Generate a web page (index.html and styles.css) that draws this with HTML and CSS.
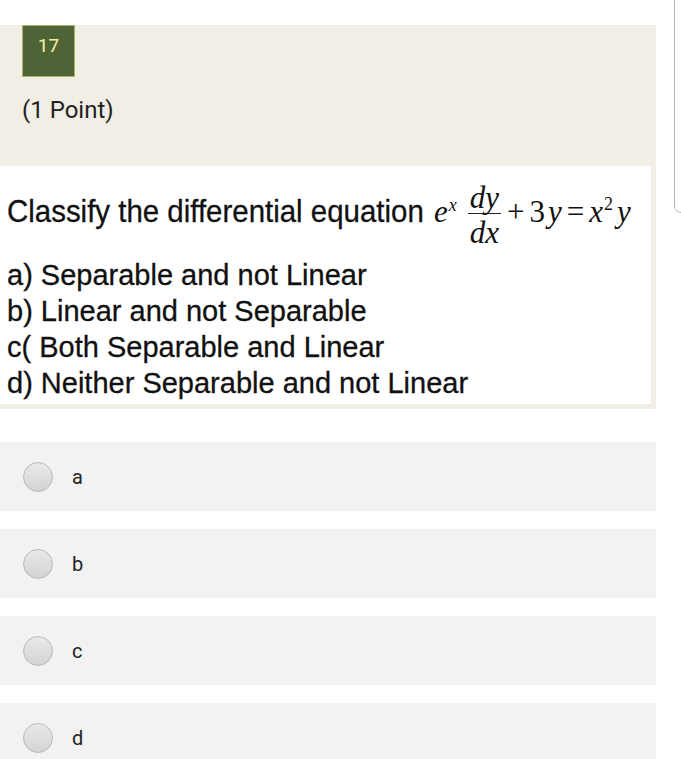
FILE: index.html
```html
<!DOCTYPE html>
<html lang="en">
<head>
<meta charset="utf-8">
<title>Question 17</title>
<link rel="stylesheet" href="styles.css">
</head>
<body>
<div class="scroll-edge"></div>
<main class="page">
  <section class="card">
    <div class="badge">17</div>
    <div class="points">(1 Point)</div>
    <div class="qimg">
      <div class="q-line"><span class="q-wrap"><span class="q-text">Classify the differential equation</span></span><span class="eq"><i>e</i><sup class="sup-i">x</sup><span class="frac"><span class="num"><i>dy</i></span><span class="den"><i>dx</i></span></span><span class="op">+</span>3<i class="y1">y</i><span class="op">=</span><i>x</i><sup class="sup">2</sup><i class="y2">y</i></span></div>
      <div class="choices">
        <div>a) Separable and not Linear</div>
        <div>b) Linear and not Separable</div>
        <div>c( Both Separable and Linear</div>
        <div>d) Neither Separable and not Linear</div>
      </div>
    </div>
  </section>
  <ul class="options">
    <li class="opt"><span class="radio"></span><span class="lbl">a</span></li>
    <li class="opt"><span class="radio"></span><span class="lbl">b</span></li>
    <li class="opt"><span class="radio"></span><span class="lbl">c</span></li>
    <li class="opt"><span class="radio"></span><span class="lbl">d</span></li>
  </ul>
</main>
</body>
</html>
```
FILE: styles.css
```css
html, body {
  margin: 0;
  padding: 0;
  background: #ffffff;
  font-family: Roboto, "Liberation Sans", Arial, sans-serif;
  overflow: hidden;
}

.scroll-edge {
  position: fixed;
  left: 674px;
  top: -20px;
  width: 30px;
  height: 233px;
  box-sizing: border-box;
  border: 1px solid #b5b5b5;
  border-radius: 7px;
}

.page {
  width: 656px;
  padding-top: 25px;
}

.card {
  background: #f1eee5;
  padding: 0 5px 5px 0;
}

.badge {
  margin-left: 22px;
  width: 53px;
  height: 52px;
  box-sizing: border-box;
  background: #4f6436;
  border: 1px solid #b0b067;
  color: #f3eea3;
  font-size: 19px;
  line-height: 40px;
  text-align: center;
}

.points {
  padding: 20px 0 42px 22px;
  font-size: 24px;
  line-height: 27px;
  color: #222222;
}

.qimg {
  background: #ffffff;
  height: 238px;
  padding-left: 7px;
  color: #111111;
  font-family: "Liberation Sans", Arial, sans-serif;
  -webkit-text-stroke: 0.3px #111111;
}

.q-line {
  box-sizing: border-box;
  height: 80px;
  padding-top: 16px;
  white-space: nowrap;
  font-size: 32px;
  line-height: 1;
}

.q-wrap {
  display: inline-block;
  width: 427px;
}

.q-text {
  display: inline-block;
  transform: scaleX(0.92);
  transform-origin: 0 50%;
}

.eq {
  font-family: "Liberation Serif", "Times New Roman", serif;
  font-size: 31px;
  color: #111111;
  -webkit-text-stroke: 0;
}

.eq i {
  font-style: italic;
}

.sup-i {
  font-style: italic;
  font-size: 18px;
  vertical-align: 11px;
  margin-left: 1px;
}

.sup {
  font-size: 18px;
  vertical-align: 12px;
  margin-left: 1px;
}

.frac {
  display: inline-flex;
  flex-direction: column;
  align-items: center;
  vertical-align: middle;
  margin: 0 1px 0 11px;
  line-height: 1;
}

.num, .den {
  padding: 0 2px;
}

.den {
  border-top: 1px solid #222;
  padding-top: 3px;
}

.op {
  margin: 0 5px;
}

.y1 {
  margin-left: 3px;
}

.y2 {
  margin-left: 4px;
}

.choices {
  margin-top: 11px;
  font-size: 29px;
  line-height: 36px;
  white-space: nowrap;
}

.options {
  list-style: none;
  margin: 33px 0 0;
  padding: 0;
  display: flex;
  flex-direction: column;
  gap: 18px;
}

.opt {
  height: 69px;
  background: #f2f2f2;
  display: flex;
  align-items: center;
  padding-left: 23px;
}

.radio {
  width: 30px;
  height: 30px;
  box-sizing: border-box;
  border-radius: 50%;
  border: 1px solid #b9b9b9;
  background: linear-gradient(#e9e9e9, #d3d3d3);
}

.lbl {
  margin-left: 19px;
  font-size: 20px;
  color: #222222;
}
```
